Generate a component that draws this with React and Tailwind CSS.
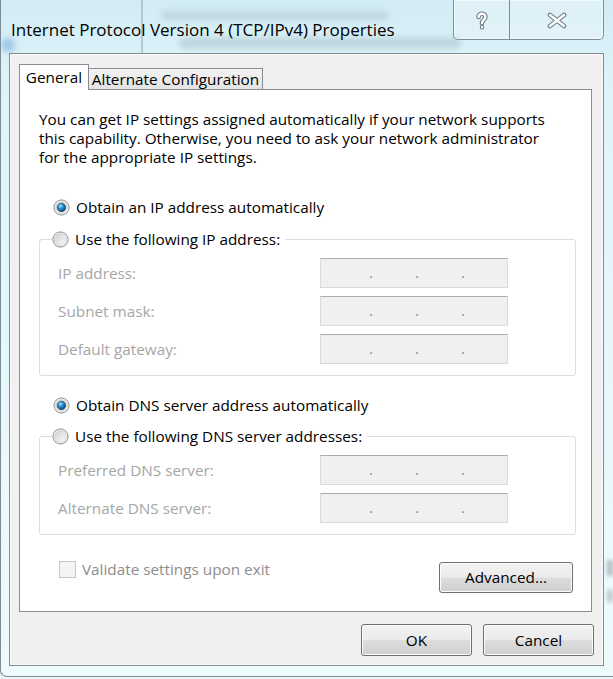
import React from 'react'

const Radio = ({ checked }) => (
  <svg width="17" height="17" viewBox="0 0 17 17" className="shrink-0">
    <defs>
      <linearGradient id="radioFill" x1="0" y1="0" x2="1" y2="1">
        <stop offset="0" stopColor="#cfcfcf" />
        <stop offset="1" stopColor="#fdfdfd" />
      </linearGradient>
      <radialGradient id="radioDot" cx="0.38" cy="0.32" r="0.75">
        <stop offset="0" stopColor="#a8e2fb" />
        <stop offset="0.4" stopColor="#2a93d4" />
        <stop offset="1" stopColor="#0c3c66" />
      </radialGradient>
    </defs>
    <circle cx="8.5" cy="8.5" r="7.6" fill="#f3f3f3" stroke="#8c8e8f" strokeWidth="1" />
    <circle cx="8.5" cy="8.5" r="5.8" fill="url(#radioFill)" stroke="#c4c4c4" strokeWidth="0.6" />
    {checked && <circle cx="8.5" cy="8.5" r="4.2" fill="url(#radioDot)" stroke="#17466f" strokeWidth="0.7" />}
  </svg>
)

const IpField = () => (
  <div className="flex h-[30px] w-[188px] items-center border border-[#dadada] border-t-[#acacac] bg-[#f0f0f0] pl-[6px] text-[#8d8d8d]">
    <span className="w-[46px] text-right leading-none">.</span>
    <span className="w-[46px] text-right leading-none">.</span>
    <span className="w-[46px] text-right leading-none">.</span>
  </div>
)

const FieldRow = ({ label }) => (
  <div className="flex items-center">
    <span className="w-[262px] text-[#a6a6a6]">{label}</span>
    <IpField />
  </div>
)

const GroupBox = ({ legend, rows }) => (
  <fieldset className="ml-[19px] w-[537px] rounded-[3px] border border-[#d5dfe5] pb-[11px]">
    <legend className="ml-[12px] flex h-[20px] items-center gap-[6px] pr-[5px]">
      <Radio />
      <span>{legend}</span>
    </legend>
    <div className="flex flex-col gap-[8px] pl-[18px] pt-[9px]">
      {rows.map((r) => (
        <FieldRow key={r} label={r} />
      ))}
    </div>
  </fieldset>
)

const WinButton = ({ children, className }) => (
  <button
    className={
      'flex items-center justify-center rounded-[3px] border border-[#707070] bg-[linear-gradient(#f2f2f2_0%,#ebebeb_49%,#dddddd_51%,#cfcfcf_100%)] shadow-[inset_0_0_0_1px_#fbfbfb] ' +
      className
    }
  >
    {children}
  </button>
)

const CaptionGlyph = ({ d, w, h }) => (
  <svg width={w} height={h} viewBox={`0 0 ${w} ${h}`}>
    <path d={d} fill="none" stroke="#6f7b83" strokeWidth="4.6" strokeLinecap="round" strokeLinejoin="round" />
    <path d={d} fill="none" stroke="#ffffff" strokeWidth="2.4" strokeLinecap="round" strokeLinejoin="round" />
  </svg>
)

export default function App() {
  return (
    <div className="h-[679px] w-[613px] overflow-hidden bg-[#e9f7fb] font-['Open_Sans',sans-serif] text-[15.3px] leading-[19px] text-black">
      <div className="relative flex h-[677px] w-[613px] flex-col rounded-bl-[7px] border-b border-l border-[#7d8c95] bg-[linear-gradient(180deg,#d2ecf5_0%,#def3f9_12%,#e6f7fb_50%,#edfbfd_100%)]">
        {/* blurred window behind the glass */}
        <div className="absolute left-[140px] top-0 h-[56px] w-[2px] bg-[#8fa3ad]/50 blur-[0.6px]" />
        <div className="absolute left-[160px] top-[11px] h-[9px] w-[228px] rounded-full bg-[#7d929c]/25 blur-[3px]" />
        <div className="absolute left-[178px] top-[38px] h-[10px] w-[282px] rounded-full bg-[#7d929c]/30 blur-[3px]" />
        <div className="absolute left-0 top-[38px] h-[14px] w-[14px] rounded-full bg-[#6fa8d8]/60 blur-[3px]" />
        <div className="absolute right-0 top-[560px] h-[16px] w-[6px] bg-[#8a959c]/60 blur-[2px]" />
        <div className="absolute right-0 top-[590px] h-[12px] w-[6px] bg-[#8a959c]/50 blur-[2px]" />

        {/* title bar */}
        <div className="relative flex h-[53px] items-start">
          <div className="pl-[10px] pt-[18px] text-[17px] leading-[24px]">Internet Protocol Version 4 (TCP/IPv4) Properties</div>
          <div className="ml-auto mr-[9px] flex h-[40px] w-[151px] rounded-b-[5px] border border-t-0 border-[#7e8d97] bg-white/25 shadow-[inset_0_0_0_1px_rgba(255,255,255,0.5)]">
            <div className="flex w-[56px] items-center justify-center border-r border-[#7e8d97] pt-[2px]">
              <CaptionGlyph w={12} h={19} d="M2.6 6 C2.6 1.6 9.4 1.6 9.4 6 C9.4 9 6 9 6 12 M6 16.2 L6 16.3" />
            </div>
            <div className="flex flex-1 items-center justify-center pt-[2px]">
              <CaptionGlyph w={20} h={17} d="M3 3 L17 14 M17 3 L3 14" />
            </div>
          </div>
        </div>

        {/* client area */}
        <div className="relative ml-[8px] flex h-[613px] w-[595px] flex-col border border-[#858d93] bg-[#f0f0f0] pl-[9px] pt-[10px] shadow-[inset_0_0_0_1px_#fafafa]">
          <div className="flex h-[25px] items-end">
            <div className="relative z-10 -mb-px flex h-[26px] w-[70px] items-start justify-center border border-b-0 border-[#898c95] bg-white pt-[3px]">
              General
            </div>
            <div className="flex h-[21px] w-[174px] items-center justify-center border border-b-0 border-l-0 border-[#898c95] bg-[linear-gradient(#f3f3f3,#e3e3e3)]">
              Alternate Configuration
            </div>
          </div>

          <div className="flex h-[523px] w-[573px] flex-col border border-[#898c95] bg-white">
            <p className="pl-[19px] pt-[20px]">
              You can get IP settings assigned automatically if your network supports
              <br />
              this capability. Otherwise, you need to ask your network administrator
              <br />
              for the appropriate IP settings.
            </p>

            <div className="mt-[31px] flex items-center gap-[6px] pl-[33px]">
              <Radio checked />
              <span>Obtain an IP address automatically</span>
            </div>

            <div className="mt-[12px]">
              <GroupBox legend="Use the following IP address:" rows={['IP address:', 'Subnet mask:', 'Default gateway:']} />
            </div>

            <div className="mt-[20px] flex items-center gap-[6px] pl-[33px]">
              <Radio checked />
              <span>Obtain DNS server address automatically</span>
            </div>

            <div className="mt-[11px]">
              <GroupBox legend="Use the following DNS server addresses:" rows={['Preferred DNS server:', 'Alternate DNS server:']} />
            </div>

            <div className="mt-[25px] flex items-start justify-between pl-[39px] pr-[18px]">
              <div className="flex items-center gap-[6px] text-[#8d8d8d]">
                <span className="h-[17px] w-[17px] border border-[#c6c6c6] bg-[#f4f4f4]" />
                <span>Validate settings upon exit</span>
              </div>
              <WinButton className="mt-[2px] h-[31px] w-[134px]">Advanced...</WinButton>
            </div>
          </div>

          <div className="mt-[12px] flex justify-end gap-[11px] pr-[9px]">
            <WinButton className="h-[32px] w-[111px]">OK</WinButton>
            <WinButton className="h-[32px] w-[111px]">Cancel</WinButton>
          </div>
        </div>
      </div>
    </div>
  )
}
